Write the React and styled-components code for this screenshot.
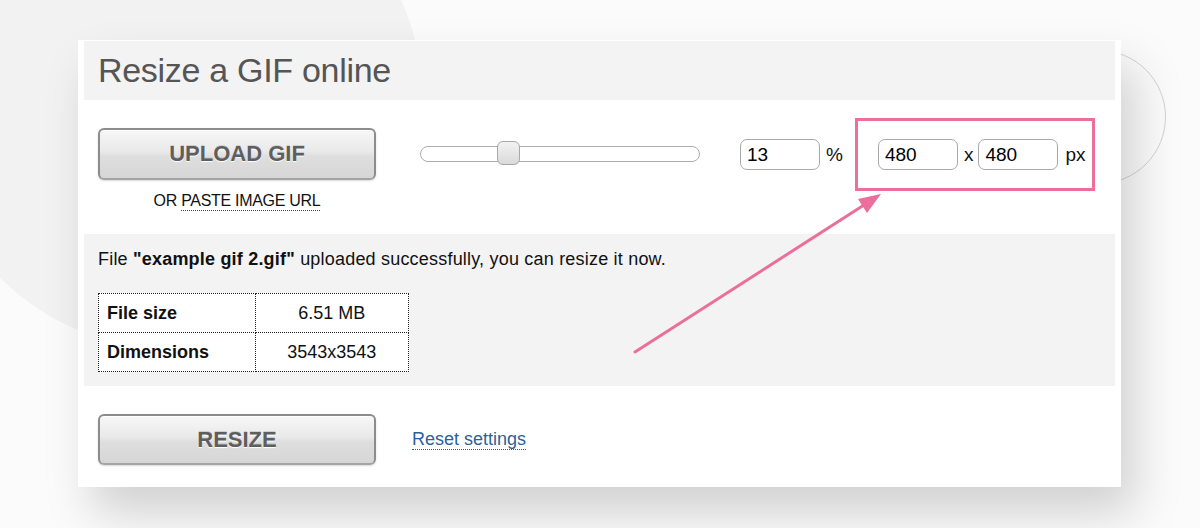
import React from 'react';
import styled, { createGlobalStyle } from 'styled-components';

const GlobalStyle = createGlobalStyle`
  html, body {
    margin: 0;
    padding: 0;
    background: #fbfbfb;
  }
  body {
    font-family: "Liberation Sans", Arial, sans-serif;
  }
`;

const Page = styled.div`
  position: relative;
  width: 1200px;
  height: 528px;
  overflow: hidden;
  background: #fbfbfb;
  padding: 40px 0 0 78px;
  box-sizing: border-box;
`;

// background decoration
const BigBlob = styled.div`
  position: absolute;
  left: -73px;
  top: -146px;
  width: 496px;
  height: 496px;
  border-radius: 50%;
  background: #f2f2f2;
`;

const RingOutline = styled.div`
  position: absolute;
  left: 1032px;
  top: 50px;
  width: 134px;
  height: 134px;
  border-radius: 50%;
  border: 1px solid #d2d2d2;
  box-sizing: border-box;
`;

const Card = styled.div`
  position: relative;
  width: 1043px;
  background: #ffffff;
  padding: 1px 6px 22px;
  box-sizing: border-box;
  box-shadow: 14px 26px 44px rgba(0, 0, 0, 0.17);
`;

const Header = styled.div`
  height: 59px;
  background: #f3f3f3;
  display: flex;
  align-items: center;
  padding-left: 14px;
`;

const Title = styled.h1`
  margin: 0;
  font-size: 34px;
  font-weight: normal;
  color: #555555;
  letter-spacing: -0.3px;
`;

const ControlsRow = styled.div`
  height: 134px;
  box-sizing: border-box;
  padding: 18px 14px 0;
  display: flex;
  align-items: flex-start;
`;

const UploadCol = styled.div`
  width: 278px;
  margin-top: 10px;
  display: flex;
  flex-direction: column;
  align-items: center;
`;

const GrayButton = styled.button`
  width: 278px;
  height: ${({ h }) => h || 52}px;
  border: 2px solid #8c8c8c;
  border-bottom-color: #a4a4a4;
  border-radius: 6px;
  background: linear-gradient(#f7f7f7 0%, #e9e9e9 45%, #dedede 55%, #d6d6d6 100%);
  box-shadow: inset 0 1px 0 #ffffff, 0 1px 2px rgba(0, 0, 0, 0.15);
  font-family: "Liberation Sans", Arial, sans-serif;
  font-size: 22px;
  font-weight: bold;
  color: #5e5e5e;
  text-shadow: 0 1px 1px #ffffff, 0 -1px 0 rgba(0, 0, 0, 0.15);
  cursor: pointer;
  padding: 0;
`;

const PasteLine = styled.div`
  margin-top: 12px;
  font-size: 16px;
  color: #111111;
  letter-spacing: -0.3px;
`;

const DottedLink = styled.span`
  border-bottom: 1px dotted #444444;
  padding-bottom: 1px;
`;

const SliderTrack = styled.div`
  position: relative;
  width: 280px;
  height: 16px;
  margin: 28px 0 0 44px;
  border: 1px solid #acacac;
  border-radius: 8px;
  background: #ffffff;
  box-sizing: border-box;
  flex-shrink: 0;
`;

const SliderThumb = styled.div`
  position: absolute;
  top: -6px;
  width: 23px;
  height: 24px;
  border: 1px solid #a8a8a8;
  border-radius: 6px;
  box-sizing: border-box;
  background: linear-gradient(#f2f2f2, #e6e6e6 50%, #dadada);
`;

const NumInput = styled.input`
  width: 80px;
  height: 31px;
  box-sizing: border-box;
  border: 1px solid #a9a9a9;
  border-radius: 7px;
  padding: 0 6px;
  font-family: "Liberation Sans", Arial, sans-serif;
  font-size: 19px;
  color: #000000;
  background: #ffffff;
  outline: none;
`;

const Unit = styled.span`
  font-size: 19px;
  color: #111111;
  margin: 0 ${({ right }) => right || 0}px 0 ${({ left }) => left || 0}px;
`;

const PercentGroup = styled.div`
  display: flex;
  align-items: center;
  margin: 21px 0 0 40px;
`;

const Highlight = styled.div`
  width: 240px;
  height: 73px;
  box-sizing: border-box;
  border: 3px solid #ec6e9b;
  margin-left: 12px;
  display: flex;
  align-items: center;
  padding-left: 20px;
`;

const InfoPanel = styled.div`
  height: 152px;
  box-sizing: border-box;
  background: #f3f3f3;
  padding: 15px 14px 0;
`;

const InfoText = styled.p`
  margin: 0;
  font-size: 18px;
  line-height: 21px;
  color: #111111;
  letter-spacing: 0.2px;
`;

const InfoTable = styled.table`
  margin-top: 23px;
  border-collapse: collapse;
  background: #ffffff;
  width: 311px;
`;

const Cell = styled.td`
  border: 1px dotted #222222;
  height: 38px;
  padding: 0 8px;
  font-size: 18px;
  color: #111111;
  width: ${({ w }) => w}px;
  font-weight: ${({ bold }) => (bold ? 'bold' : 'normal')};
  text-align: ${({ bold }) => (bold ? 'left' : 'center')};
`;

const BottomRow = styled.div`
  display: flex;
  align-items: center;
  padding: 28px 14px 0;
`;

const ResetLink = styled.a`
  margin-left: 36px;
  font-size: 18px;
  color: #2d5f9c;
  text-decoration: none;
  border-bottom: 1px dotted #2d5f9c;
  line-height: 20px;
  cursor: pointer;
`;

const Overlay = styled.svg`
  position: absolute;
  left: 0;
  top: 0;
  pointer-events: none;
`;

const Slider = ({ value }) => (
  <SliderTrack>
    <SliderThumb style={{ left: `${Math.round((value / 100) * 257) + 43}px` }} />
  </SliderTrack>
);

const App = () => {
  const rows = [
    { label: 'File size', value: '6.51 MB' },
    { label: 'Dimensions', value: '3543x3543' },
  ];

  return (
    <>
      <GlobalStyle />
      <Page>
        <BigBlob />
        <RingOutline />
        <Card>
          <Header>
            <Title>Resize a GIF online</Title>
          </Header>

          <ControlsRow>
            <UploadCol>
              <GrayButton>UPLOAD GIF</GrayButton>
              <PasteLine>
                OR <DottedLink>PASTE IMAGE URL</DottedLink>
              </PasteLine>
            </UploadCol>

            <Slider value={13} />

            <PercentGroup>
              <NumInput readOnly value="13" />
              <Unit left={6}>%</Unit>
            </PercentGroup>

            <Highlight>
              <NumInput readOnly value="480" />
              <Unit left={6} right={5}>x</Unit>
              <NumInput readOnly value="480" />
              <Unit left={7}>px</Unit>
            </Highlight>
          </ControlsRow>

          <InfoPanel>
            <InfoText>
              File <b>"example gif 2.gif"</b> uploaded successfully, you can resize it now.
            </InfoText>
            <InfoTable>
              <tbody>
                {rows.map((r) => (
                  <tr key={r.label}>
                    <Cell bold w={155}>{r.label}</Cell>
                    <Cell w={156}>{r.value}</Cell>
                  </tr>
                ))}
              </tbody>
            </InfoTable>
          </InfoPanel>

          <BottomRow>
            <GrayButton h={51}>RESIZE</GrayButton>
            <ResetLink>Reset settings</ResetLink>
          </BottomRow>
        </Card>

        {/* pink annotation arrow */}
        <Overlay width="1200" height="528" viewBox="0 0 1200 528">
          <line x1="635" y1="352" x2="864" y2="205" stroke="#ec6e9b" strokeWidth="3" strokeLinecap="round" />
          <polygon points="881,194 867,213 858,199" fill="#ec6e9b" />
        </Overlay>
      </Page>
    </>
  );
};

export default App;
